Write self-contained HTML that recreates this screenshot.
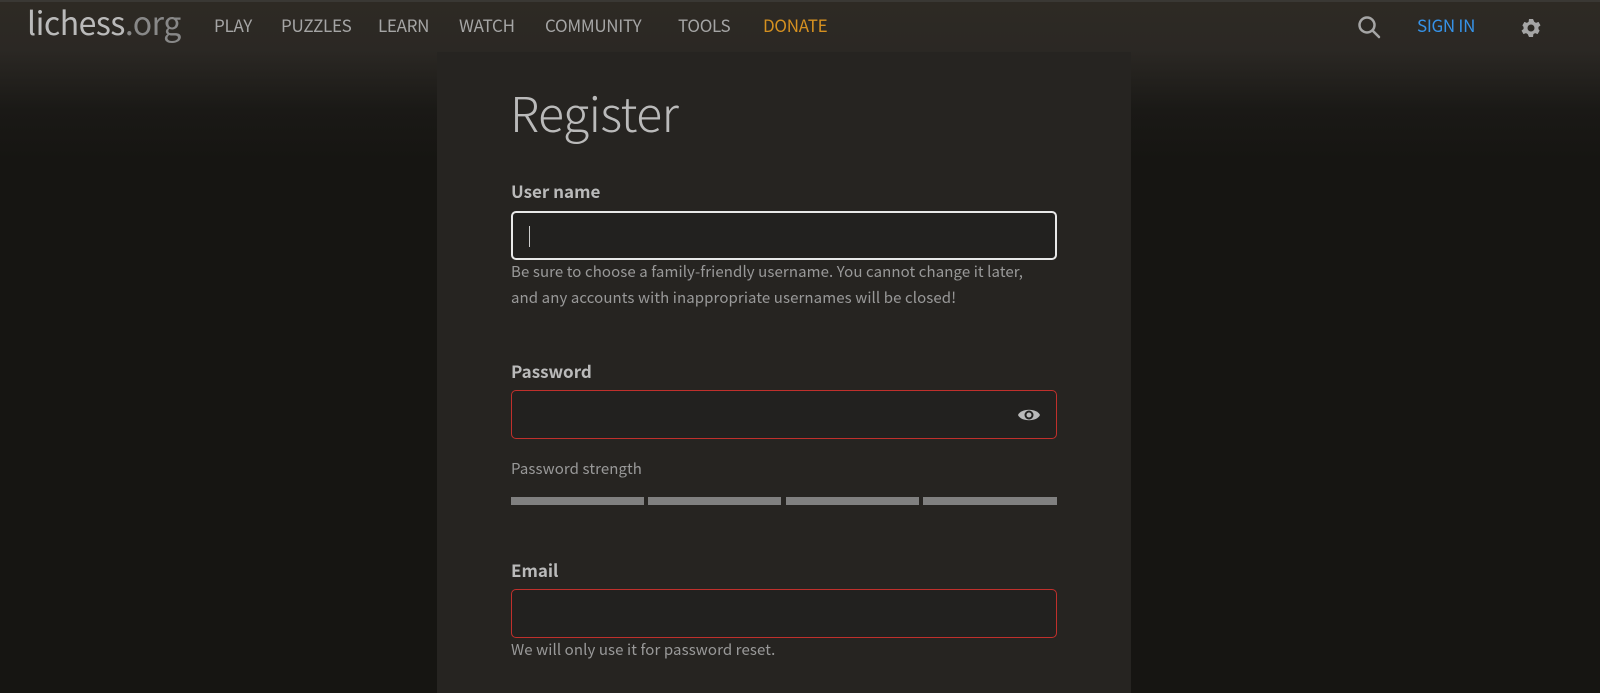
<!DOCTYPE html>
<html><head><meta charset="utf-8"><style>
*{margin:0;padding:0;box-sizing:border-box}
body{width:1600px;height:693px;overflow:hidden;font-family:"Noto Sans CJK JP","Liberation Sans",sans-serif;background:linear-gradient(#2e2a24 0px,#2b2824 50px,#1a1916 110px,#161512 160px,#161512 100%);position:relative;color:#bababa}
.top{position:absolute;top:0;left:0;width:1600px;height:2px;background:#3a3834}
.logo{position:absolute;left:27px;top:-1px;font-size:32px;color:#bababa;letter-spacing:-0.5px}
.logo span{color:#888}
.nav{position:absolute;top:12px;font-size:17px;color:#a5a5a5;letter-spacing:-0.3px}
.card{position:absolute;left:437px;top:52px;width:694px;height:641px;background:#262421}
h1{position:absolute;left:510px;top:76px;font-size:48px;font-weight:300;color:#bababa;font-family:"Noto Sans CJK JP","Liberation Sans",sans-serif;letter-spacing:-0.5px}
.lbl{position:absolute;left:511px;font-size:17px;font-weight:bold;color:#bababa}
.inp{position:absolute;left:511px;width:546px;height:49px;background:#22211f;border-radius:5px}
.help{position:absolute;left:511px;font-size:15px;color:#999;line-height:26px;letter-spacing:0.1px}
.bar{position:absolute;top:497px;height:8px;background:#808080;width:133px}
</style></head><body>
<div class="top"></div>
<div class="logo">lichess<span>.org</span></div>
<div class="nav" style="left:214px">PLAY</div>
<div class="nav" style="left:281px">PUZZLES</div>
<div class="nav" style="left:378px">LEARN</div>
<div class="nav" style="left:459px">WATCH</div>
<div class="nav" style="left:545px">COMMUNITY</div>
<div class="nav" style="left:678px">TOOLS</div>
<div class="nav" style="left:763px;color:#d59020">DONATE</div>
<svg style="position:absolute;left:1357px;top:15px" width="26" height="26" viewBox="0 0 26 26"><circle cx="10" cy="10" r="7.5" fill="none" stroke="#a5a5a5" stroke-width="2.5"/><line x1="15.5" y1="15.5" x2="22" y2="22" stroke="#a5a5a5" stroke-width="2.5" stroke-linecap="round"/></svg>
<div class="nav" style="left:1417px;color:#3692e7">SIGN IN</div>
<svg style="position:absolute;left:1519px;top:16px" width="24" height="24" viewBox="0 0 24 24"><path fill="#a5a5a5" fill-rule="evenodd" d="M19.4 13a7.5 7.5 0 000-2l2.1-1.6-2-3.5-2.5 1a7 7 0 00-1.7-1L14 3h-4l-.4 2.9a7 7 0 00-1.7 1l-2.5-1-2 3.5L4.6 11a7.5 7.5 0 000 2l-2.1 1.6 2 3.5 2.5-1a7 7 0 001.7 1L10 21h4l.4-2.9a7 7 0 001.7-1l2.5 1 2-3.5zM12 15.5a3.5 3.5 0 110-7 3.5 3.5 0 010 7z"/></svg>
<div class="card"></div>
<h1>Register</h1>
<div class="lbl" style="top:178px">User name</div>
<div class="inp" style="top:211px;border:2px solid #e8e8e8"><div style="position:absolute;left:16px;top:13px;width:1px;height:21px;background:#ccc"></div></div>
<div class="help" style="top:259px">Be sure to choose a family-friendly username. You cannot change it later,<br>and any accounts with inappropriate usernames will be closed!</div>
<div class="lbl" style="top:358px">Password</div>
<div class="inp" style="top:390px;border:1px solid #c0302c"></div>
<svg style="position:absolute;left:1017px;top:406px" width="24" height="18" viewBox="0 0 24 18"><path d="M1 9C4 2 20 2 23 9 20 16 4 16 1 9z" fill="#bababa"/><circle cx="12" cy="9" r="4.5" fill="#22211f"/><circle cx="12" cy="9" r="2.5" fill="#bababa"/></svg>
<div class="help" style="top:456px">Password strength</div>
<div class="bar" style="left:511px"></div>
<div class="bar" style="left:648px"></div>
<div class="bar" style="left:786px"></div>
<div class="bar" style="left:923px;width:134px"></div>
<div class="lbl" style="top:557px">Email</div>
<div class="inp" style="top:589px;border:1px solid #c0302c"></div>
<div class="help" style="top:637px">We will only use it for password reset.</div>
</body></html>
